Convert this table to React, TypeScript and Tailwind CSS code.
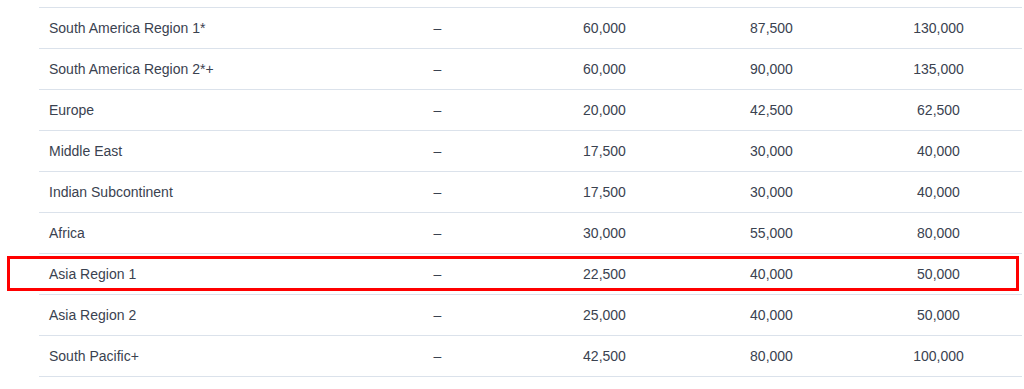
import React from "react";

const rows: [string, string, string, string, string][] = [
  ["South America Region 1*", "–", "60,000", "87,500", "130,000"],
  ["South America Region 2*+", "–", "60,000", "90,000", "135,000"],
  ["Europe", "–", "20,000", "42,500", "62,500"],
  ["Middle East", "–", "17,500", "30,000", "40,000"],
  ["Indian Subcontinent", "–", "17,500", "30,000", "40,000"],
  ["Africa", "–", "30,000", "55,000", "80,000"],
  ["Asia Region 1", "–", "22,500", "40,000", "50,000"],
  ["Asia Region 2", "–", "25,000", "40,000", "50,000"],
  ["South Pacific+", "–", "42,500", "80,000", "100,000"],
];

export default function App() {
  return (
    <div
      className="w-[1024px] h-[389px] bg-white pt-[7px] pl-[39px] overflow-hidden"
      style={{ fontFamily: '"Liberation Sans", Arial, Helvetica, sans-serif' }}
    >
      <div className="w-[983px] border-t border-[#dbe2eb] text-[14px] text-[#3a4250]">
        {rows.map((r, i) => (
          <div
            key={i}
            className="relative grid grid-cols-[315px_167px_167px_167px_167px] h-[41px] border-b border-[#dbe2eb] items-center"
          >
            <div className="pl-[10px]">{r[0]}</div>
            <div className="text-center">{r[1]}</div>
            <div className="text-center">{r[2]}</div>
            <div className="text-center">{r[3]}</div>
            <div className="text-center">{r[4]}</div>
            {r[0] === "Asia Region 1" && (
              <div className="absolute left-[-32px] right-[3px] top-[2px] bottom-[3px] border-[3px] border-[#ff0000] pointer-events-none" />
            )}
          </div>
        ))}
      </div>
    </div>
  );
}
